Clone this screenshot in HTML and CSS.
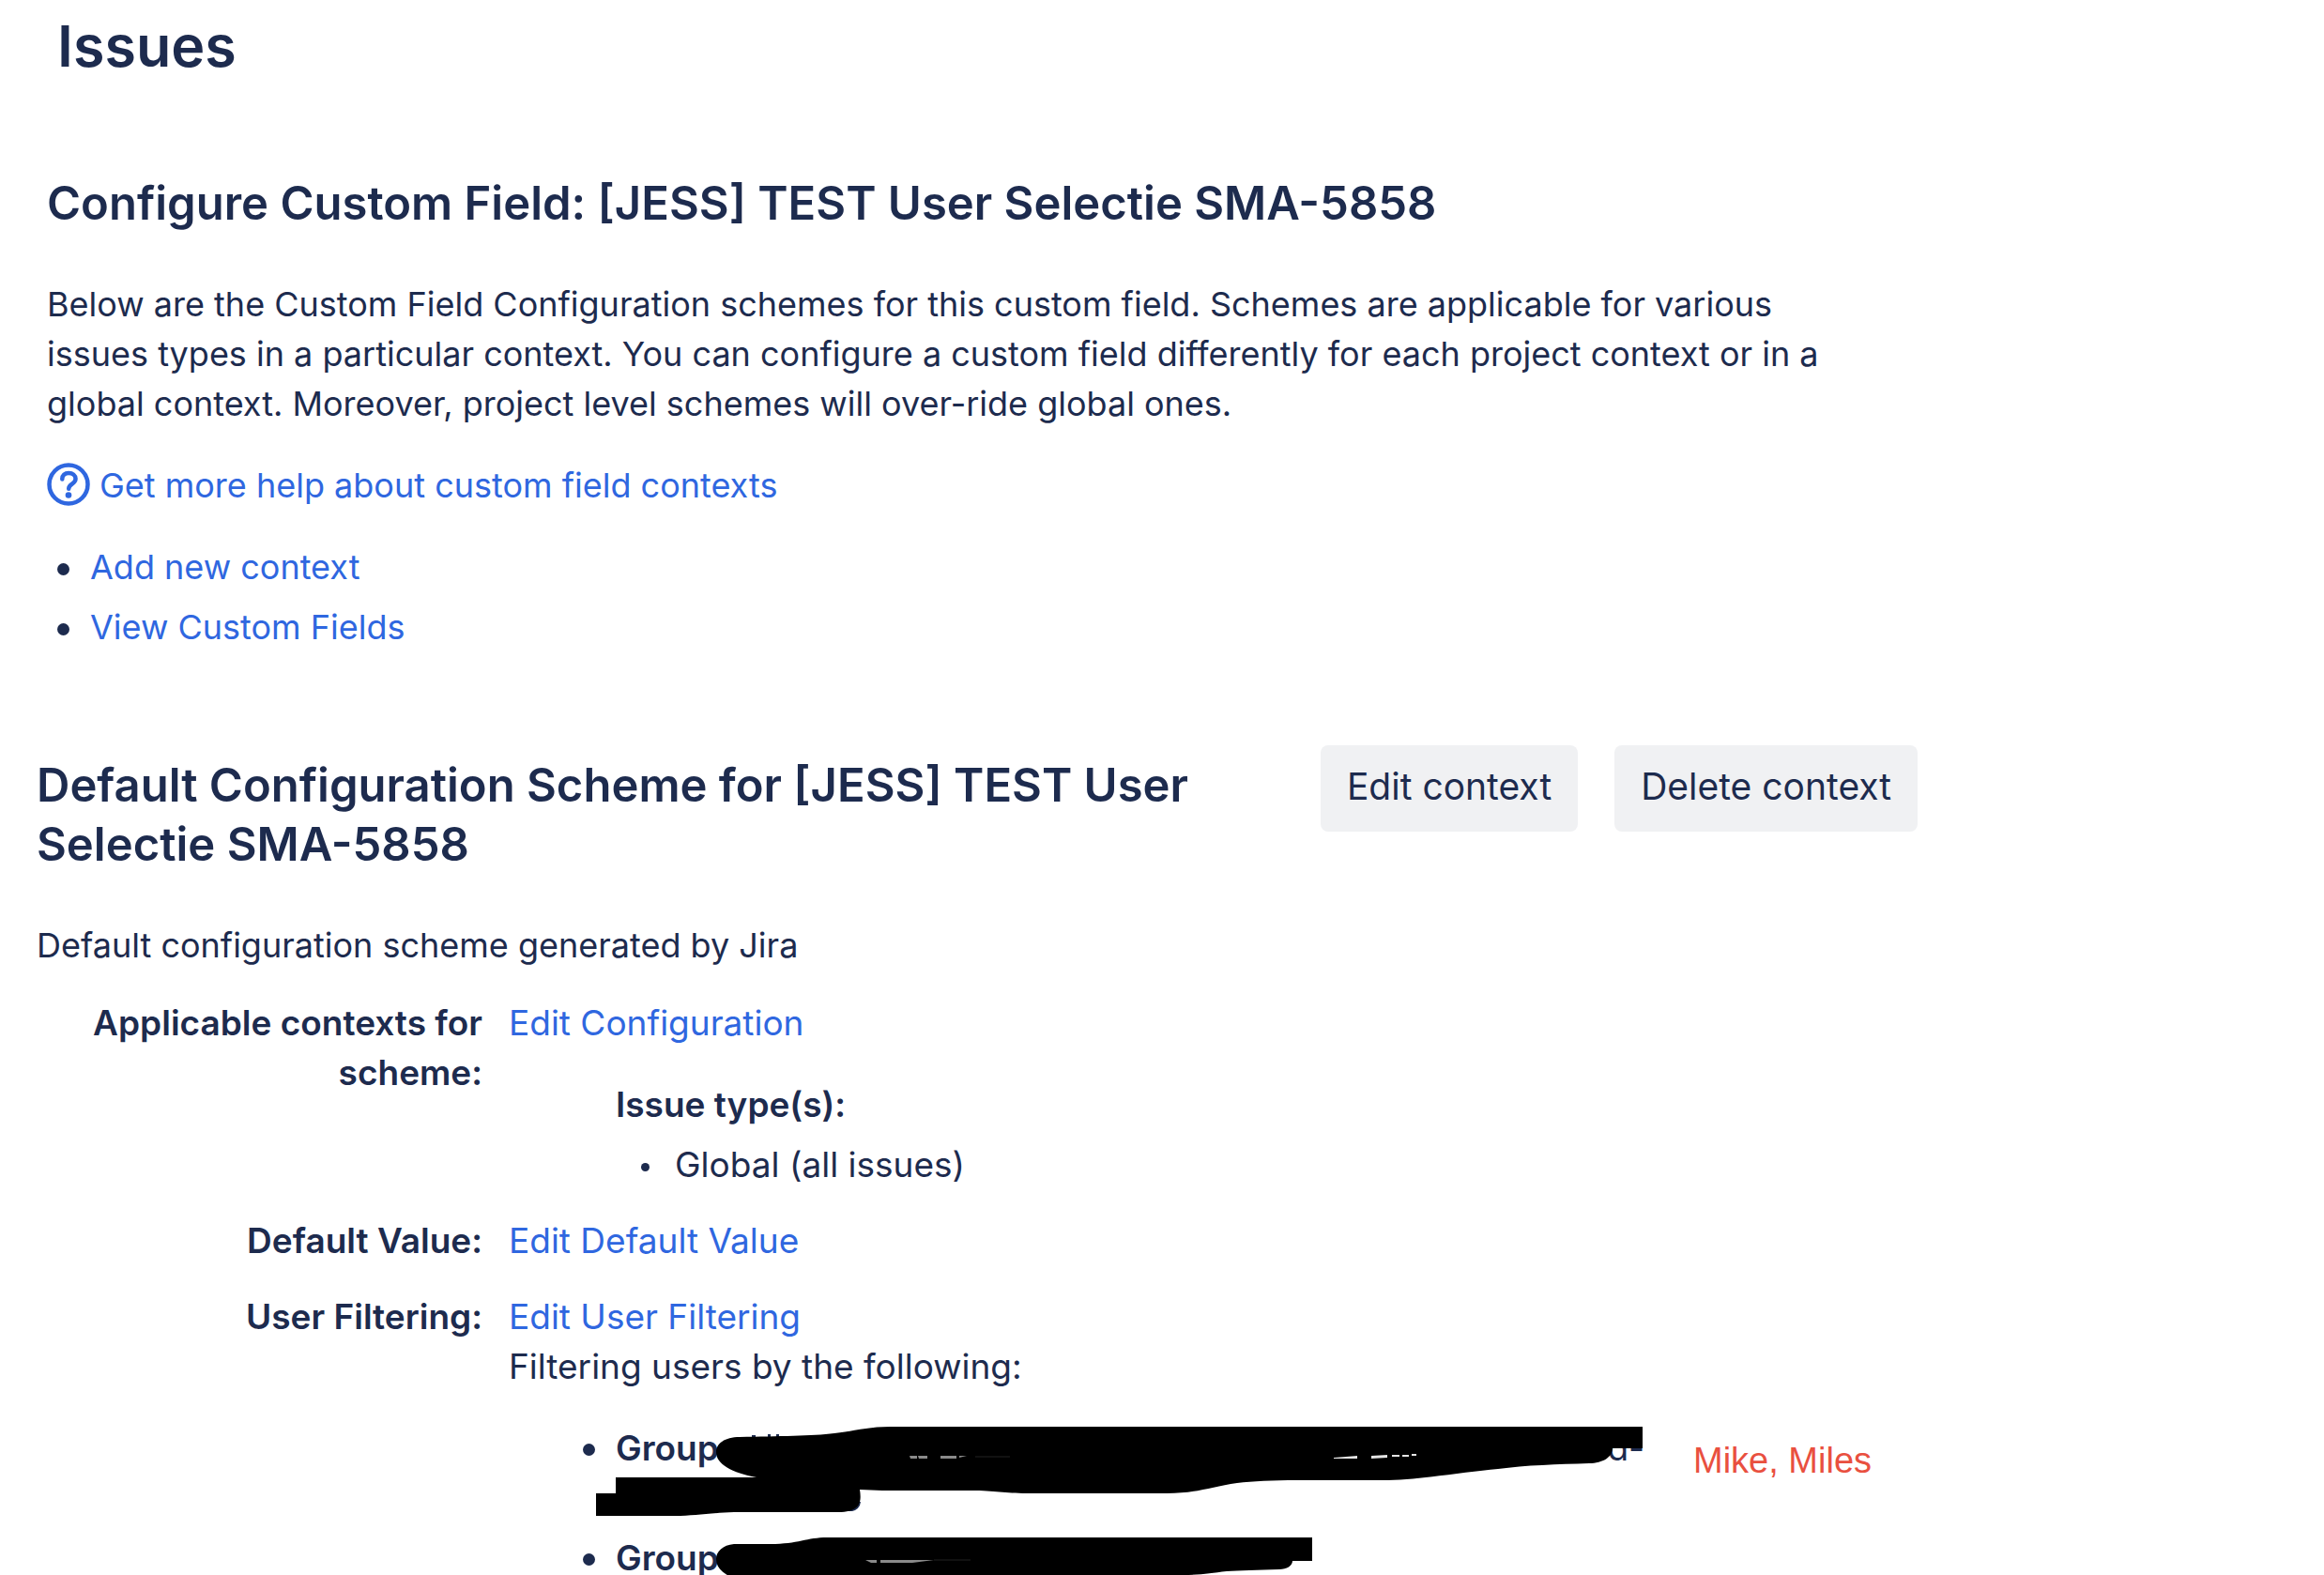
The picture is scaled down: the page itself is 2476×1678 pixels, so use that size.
FILE: index.html
```html
<!DOCTYPE html>
<html lang="en">
<head>
    <meta charset="UTF-8">
    <meta name="viewport" content="width=device-width, initial-scale=1.0">
    <title>Configure Custom Field</title>
    <link rel="stylesheet" href="styles.css">
</head>
<body>
    <header class="page-header">
        <h1>Issues</h1>
    </header>

    <main class="content">
        <section class="intro">
            <h2>Configure Custom Field: [JESS] TEST User Selectie SMA-5858</h2>
            <p>Below are the Custom Field Configuration schemes for this custom field. Schemes are applicable for various issues types in a particular context. You can configure a custom field differently for each project context or in a global context. Moreover, project level schemes will over-ride global ones.</p>
            <a class="help-link" href="#">
                <svg class="help-icon" viewBox="0 0 46 46" aria-hidden="true">
                    <circle cx="23" cy="21" r="20.5" fill="none" stroke="currentColor" stroke-width="4.500"/>
                    <path d="M16.300 15.500c0-4 2.700-6.500 6.900-6.500s7.300 2.400 7.300 6.200c0 5.600-7.300 5.200-7.300 10.500" fill="none" stroke="currentColor" stroke-width="4.500" stroke-linecap="round"/>
                    <circle cx="23" cy="32.500" r="3.300" fill="currentColor"/>
                </svg>
                <span>Get more help about custom field contexts</span>
            </a>
            <ul class="list">
                <li><a href="#">Add new context</a></li>
                <li><a href="#">View Custom Fields</a></li>
            </ul>
        </section>

        <section class="scheme">
            <div class="scheme-header">
                <h2>Default Configuration Scheme for [JESS] TEST User Selectie SMA-5858</h2>
                <div class="actions">
                    <button type="button">Edit context</button>
                    <button type="button">Delete context</button>
                </div>
            </div>
            <p>Default configuration scheme generated by Jira</p>

            <dl class="fields">
                <dt>Applicable contexts for scheme:</dt>
                <dd>
                    <a href="#">Edit Configuration</a>
                    <div class="issue-types">
                        <strong>Issue type(s):</strong>
                        <ul class="list small">
                            <li>Global (all issues)</li>
                        </ul>
                    </div>
                </dd>

                <dt>Default Value:</dt>
                <dd><a href="#">Edit Default Value</a></dd>

                <dt>User Filtering:</dt>
                <dd>
                    <a href="#">Edit User Filtering</a>
                    <div>Filtering users by the following:</div>
                    <div class="groups">
                        <ul class="list">
                            <li class="two-lines"><strong>Group</strong><span class="group-end">d-</span></li>
                            <li><strong>Group</strong></li>
                        </ul>
                        <!-- Group names are painted over -->
                        <svg class="redaction" viewBox="620 1516 1140 170" aria-hidden="true">
                            <path class="ink" d="M801 1529h4v3h-4zM818 1528h3v4h-3zM827 1528h3v4h-3zM900 1600h17q-1 8-9 10h-8z"/>
                            <path d="M763 1547C763 1538 772 1531 788 1531C830 1530 865 1530 889 1527C915 1524 925 1520 948 1520H1750V1543H1718C1718 1552 1708 1559 1693 1559C1660 1560 1625 1561 1596 1565C1560 1568 1510 1577 1473 1577H1382C1355 1577 1335 1578 1318 1580C1290 1584 1275 1591 1243 1591H1094C1070 1591 1060 1588 1035 1588H940L916 1587C918 1600 917 1611 893 1611H782C755 1612 740 1615 719 1615H635V1591H656V1574H806C780 1569 763 1560 763 1547Z"/>
                            <path d="M763 1661C763 1653 770 1646 782 1645H821C850 1645 860 1638 881 1638H1398V1663H1377C1377 1668 1371 1672 1363 1672C1340 1673 1320 1673 1307 1674C1290 1676 1280 1678 1260 1678V1686H790C773 1678 763 1672 763 1661Z"/>
                            <path class="gap" d="M969 1551h8v3h-7zM978 1551h10v3h-9zM1002 1551h17v3h-17zM1022 1551h8l-8 2zM922 1662h12v3h-6zM938 1662H995L972 1665H938Z"/>
                            <path class="gap light" d="M1421 1553L1446 1551V1554H1421ZM1461 1551L1478 1550V1553L1461 1554ZM1483 1550h8v2h-8zM1494 1550h7v2h-7zM1504 1549h5v2h-5z"/>
                            <path class="thin" d="M1039 1552H1076M995 1662H1034"/>
                        </svg>
                        <span class="note">Mike, Miles</span>
                    </div>
                </dd>
            </dl>
        </section>
    </main>
</body>
</html>
```

FILE: styles.css
```css
* {
    box-sizing: border-box;
}

body {
    margin: 0;
    background-color: #fff;
    color: #1d2b4e;
    font-family: Inter, "Liberation Sans", sans-serif;
    font-size: 36px;
    line-height: 53px;
    overflow: hidden;
}

h1, h2, p, ul, dl, dd {
    margin: 0;
    padding: 0;
}

h1 {
    font-size: 61px;
    line-height: 80px;
    font-weight: 600;
}

h2 {
    font-size: 49px;
    line-height: 63px;
    font-weight: 600;
}

strong, dt {
    font-weight: 600;
}

a {
    color: #2f67e0;
    text-decoration: none;
}

.page-header {
    padding: 9px 61px 0;
}

.content {
    width: 83%;
    padding: 96px 12px 0 39px;
}

.intro {
    padding: 0 50px 0 11px;
}

.intro p {
    margin-top: 50px;
}

.help-link {
    display: flex;
    align-items: center;
    gap: 10px;
    margin: 34px 0;
}

.help-icon {
    width: 46px;
    height: 46px;
    overflow: visible;
}

.list {
    list-style: none;
}

.list li {
    display: flex;
    align-items: flex-start;
    margin-bottom: 11px;
}

.list li::before {
    content: "";
    flex: none;
    width: 13px;
    height: 13px;
    margin: 22px 22px 0 11px;
    border-radius: 50%;
    background-color: #1d2b4e;
}

.list.small li::before {
    width: 9px;
    height: 9px;
    margin: 25px 27px 0;
}

.scheme {
    padding-top: 88px;
}

.scheme-header {
    display: flex;
    align-items: flex-start;
    gap: 80px;
}

.scheme-header h2 {
    flex: 1;
    padding-top: 11px;
}

.actions {
    display: flex;
    gap: 39px;
}

button {
    height: 92px;
    padding: 0 28px 6px;
    border: none;
    border-radius: 8px;
    background-color: #f0f1f3;
    color: #1d2b4e;
    font-family: inherit;
    font-size: 39px;
    cursor: pointer;
}

.scheme p {
    margin-top: 50px;
}

.fields {
    display: grid;
    grid-template-columns: 475px 1fr;
    gap: 28px;
    margin-top: 29px;
    font-size: 37px;
}

dt {
    text-align: right;
    padding-left: 50px;
}

.issue-types {
    margin: 34px 0 0 114px;
}

.issue-types .list {
    margin-top: 11px;
}

.issue-types .list li {
    margin-bottom: 0;
}

.groups {
    position: relative;
    margin-top: 34px;
    padding-left: 68px;
}

.two-lines {
    min-height: 106px;
}

.group-end {
    margin-left: auto;
    padding-right: 291px;
}

.redaction {
    position: absolute;
    left: 78px;
    top: 0;
    width: 1140px;
    height: 170px;
}

.ink {
    fill: #1d2b4e;
}

.gap {
    fill: #8a8a8a;
}

.light {
    fill: #e4e4e4;
}

.thin {
    stroke: #222;
    stroke-width: 1;
}

.note {
    position: absolute;
    left: 1262px;
    top: 14px;
    color: #e9503f;
    font-family: "Liberation Sans", Arial, sans-serif;
    font-size: 38px;
}
```
